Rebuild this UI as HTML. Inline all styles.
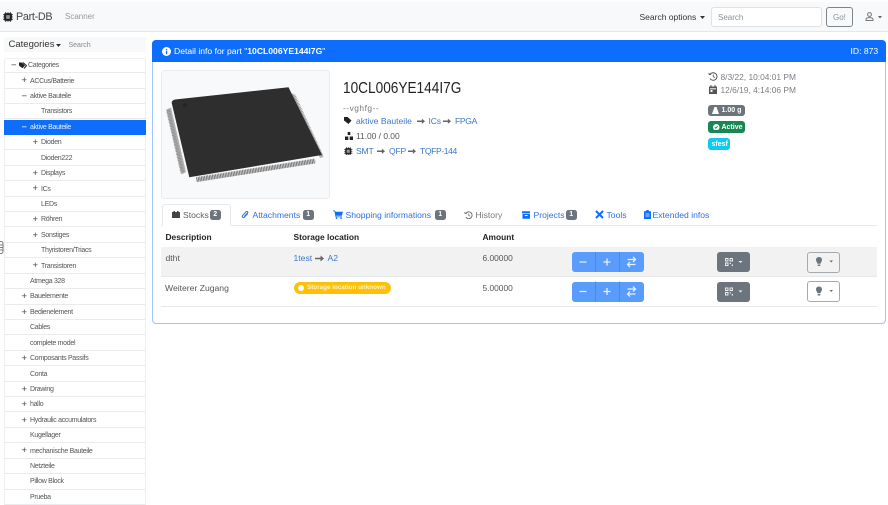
<!DOCTYPE html>
<html><head><meta charset="utf-8"><style>
*{box-sizing:border-box}
html,body{margin:0;padding:0;width:888px;height:500px;overflow:hidden;background:#fff;font-family:"Liberation Sans",sans-serif;color:#212529}
.a{position:absolute;white-space:nowrap;line-height:1}
svg{position:absolute;display:block}
.row{position:absolute;left:4px;width:141.5px;height:15.42px;border-bottom:1px solid #e9ebed;border-left:1px solid #eee;border-right:1px solid #eee;font-size:7px;letter-spacing:-.3px;line-height:14.4px;color:#555;white-space:nowrap}
.row.sel{background:#0d6efd;color:#e8f0ff;border-color:#0d6efd}
.row b{position:absolute;top:1.2px;font-weight:normal;font-size:9.5px;line-height:13px;color:#444;letter-spacing:0}
.row.sel b{color:#fff}
.row span{position:absolute;top:1.4px}
.lnk{color:#3a77c8}
.tab{position:absolute;top:204px;font-size:8.6px;line-height:1;white-space:nowrap;color:#2f6fe0}
.cnt{display:inline-block;position:absolute;background:#6c757d;color:#fff;font-size:7px;font-weight:bold;border-radius:2.5px;text-align:center;height:10px;line-height:10px;width:11.5px}
.btn{position:absolute;height:20px;border-radius:3px}
</style></head><body>

<div style="position:absolute;left:0;top:2px;width:888px;height:30px;background:#f8f9fa;border-bottom:1px solid #e6e7e9"></div>
<div style="position:absolute;left:0;top:0;width:888px;height:2px;background:#fdfdfd"></div>

<svg style="left:3px;top:11.5px" width="10" height="10" viewBox="0 0 11 11"><rect x="1.2" y="1.2" width="8.6" height="8.600" rx="1.500" fill="#222"/><path d="M3 0v11M5.500 0v11M8 0v11M0 3h11M0 5.500h11M0 8h11" stroke="#222" stroke-width=".8"/><rect x="3.500" y="3.500" width="4" height="4" fill="#999"/></svg>
<div class="a" style="left:16px;top:11.5px;font-size:10.8px;letter-spacing:-.3px;color:#444">Part-DB</div>
<div class="a" style="left:65px;top:13px;font-size:8px;color:#999">Scanner</div>

<div class="a" style="left:639.500px;top:13px;font-size:8.500px;color:#333">Search options</div>
<svg style="left:700px;top:15.500px" width="5" height="3"><path d="M0 0h5L2.500 3z" fill="#333"/></svg>
<div style="position:absolute;left:711px;top:6.500px;width:111px;height:20.500px;background:#fff;border:1px solid #dee2e6;border-radius:3px"></div>
<div class="a" style="left:718px;top:13.500px;font-size:8px;color:#8a8f94">Search</div>
<div style="position:absolute;left:826px;top:6.500px;width:27px;height:20.500px;border:1px solid #7d848a;border-radius:3px;background:#f8f9fa"></div>
<div class="a" style="left:833px;top:13.500px;font-size:8px;color:#8a9096">Go!</div>
<svg style="left:865px;top:12px" width="9" height="9" viewBox="0 0 9 9"><circle cx="4.500" cy="2.500" r="1.900" fill="none" stroke="#777"/><path d="M1 8.500V7.500C1 6 2.500 5.600 4.500 5.600S8 6 8 7.500v1z" fill="none" stroke="#777"/></svg>
<svg style="left:878px;top:16px" width="4" height="2.500"><path d="M0 0h4L2 2.500z" fill="#666"/></svg>

<div style="position:absolute;left:4px;top:37px;width:142px;height:15px;background:#f8f9fa"></div>
<div class="a" style="left:8.500px;top:39.500px;font-size:9.500px;color:#333">Categories</div>
<svg style="left:56px;top:43.500px" width="5" height="3"><path d="M0 0h5L2.500 3z" fill="#333"/></svg>
<div class="a" style="left:68.500px;top:41.500px;font-size:7px;color:#888">Search</div>

<div class="row" style="top:57.8px;border-top:1px solid #eee;border-radius:3px 3px 0 0"><b style="left:6px;top:0">−</b><svg style="left:14px;top:3.500px" width="8" height="7" viewBox="0 0 8 7"><path d="M0 .5h3l3 3-2.600 2.800L0 3.500z" fill="#222"/><path d="M4 .5l3.500 3.200-2.500 2.800" fill="none" stroke="#222"/></svg><span style="left:23px;top:.5px">Categories</span></div>
<div class="row" style="top:73.2px"><b style="left:16.500px">+</b><span style="left:25px">ACCus/Batterie</span></div>
<div class="row" style="top:88.6px"><b style="left:16.500px">−</b><span style="left:25px">aktive Bauteile</span></div>
<div class="row" style="top:104px"><span style="left:36px">Transistors</span></div>
<div class="row sel" style="top:119.500px"><b style="left:16.500px">−</b><span style="left:25px">aktive Bauteile</span></div>
<div class="row" style="top:134.900px"><b style="left:27.500px">+</b><span style="left:36px">Dioden</span></div>
<div class="row" style="top:150.300px"><span style="left:36px">Dioden222</span></div>
<div class="row" style="top:165.800px"><b style="left:27.500px">+</b><span style="left:36px">Displays</span></div>
<div class="row" style="top:181.200px"><b style="left:27.500px">+</b><span style="left:36px">ICs</span></div>
<div class="row" style="top:196.600px"><span style="left:36px">LEDs</span></div>
<div class="row" style="top:212px"><b style="left:27.500px">+</b><span style="left:36px">Röhren</span></div>
<div class="row" style="top:227.400px"><b style="left:27.500px">+</b><span style="left:36px">Sonstiges</span></div>
<div class="row" style="top:242.900px"><span style="left:36px">Thyristoren/Triacs</span></div>
<div class="row" style="top:258.300px"><b style="left:27.500px">+</b><span style="left:36px">Transistoren</span></div>
<div class="row" style="top:273.700px"><span style="left:25px">Atmega 328</span></div>
<div class="row" style="top:289.100px"><b style="left:16.500px">+</b><span style="left:25px">Bauelemente</span></div>
<div class="row" style="top:304.500px"><b style="left:16.500px">+</b><span style="left:25px">Bedienelement</span></div>
<div class="row" style="top:319.900px"><span style="left:25px">Cables</span></div>
<div class="row" style="top:335.400px"><span style="left:25px">complete model</span></div>
<div class="row" style="top:350.800px"><b style="left:16.500px">+</b><span style="left:25px">Composants Passifs</span></div>
<div class="row" style="top:366.200px"><span style="left:25px">Conta</span></div>
<div class="row" style="top:381.600px"><b style="left:16.500px">+</b><span style="left:25px">Drawing</span></div>
<div class="row" style="top:397px"><b style="left:16.500px">+</b><span style="left:25px">hallo</span></div>
<div class="row" style="top:412.400px"><b style="left:16.500px">+</b><span style="left:25px">Hydraulic accumulators</span></div>
<div class="row" style="top:427.900px"><span style="left:25px">Kugellager</span></div>
<div class="row" style="top:443.300px"><b style="left:16.500px">+</b><span style="left:25px">mechanische Bauteile</span></div>
<div class="row" style="top:458.700px"><span style="left:25px">Netzteile</span></div>
<div class="row" style="top:474.100px"><span style="left:25px">Pillow Block</span></div>
<div class="row" style="top:489.500px"><span style="left:25px">Prueba</span></div>

<svg style="left:0;top:241px" width="4" height="13" viewBox="0 0 4 13"><rect x="-3" y=".5" width="6" height="12" rx="2" fill="#fff" stroke="#555" stroke-width=".8"/><path d="M0 4h2.500M0 6.500h2.500M0 9h2.500" stroke="#555" stroke-width=".8"/></svg>

<div style="position:absolute;left:152px;top:40px;width:734px;height:284px;border:1px solid #9ec5fe;border-radius:4px;background:#fff"></div>
<div style="position:absolute;left:152px;top:40px;width:734px;height:22px;background:#0d6efd;border-radius:4px 4px 0 0"></div>
<svg style="left:162px;top:46.500px" width="9" height="9" viewBox="0 0 9 9"><circle cx="4.500" cy="4.500" r="4.500" fill="#fff"/><rect x="3.900" y="3.800" width="1.300" height="3.400" fill="#0d6efd"/><rect x="3.900" y="1.900" width="1.300" height="1.300" fill="#0d6efd"/></svg>
<div class="a" style="left:174px;top:47px;font-size:8.600px;color:#fff">Detail info for part "<b>10CL006YE144I7G</b>"</div>
<div class="a" style="left:850.500px;top:47px;font-size:8.600px;color:#fff">ID: 873</div>

<div style="position:absolute;left:161px;top:70px;width:169px;height:129px;background:#f8f9fa;border:1px solid #e9ecef;border-radius:3px"></div>
<svg style="left:161px;top:70px" width="169" height="129" viewBox="161 70 169 129">
<path d="M166.500 109.500 171 107.500 186 172 181.500 174.500 Z" fill="#b0b0b0"/>
<path d="M168 110 182.500 173" stroke="#8f8f8f" stroke-width="4" stroke-dasharray=".8 .7" fill="none"/>
<path d="M293 93 323.500 157 320 158 290 96Z" fill="#b5b5b5"/>
<path d="M294 95 322 156" stroke="#999" stroke-width="3" stroke-dasharray=".8 .7" fill="none"/>
<path d="M196 178 315 159 316 163 197 182Z" fill="#cfcfcf"/>
<path d="M196.500 179.500 315 161" stroke="#6e6e6e" stroke-width="5" stroke-dasharray=".8 .8" fill="none"/>
<path d="M175 99.500 288.500 87.300 322 155 189.300 177.300 171.700 103Q171.500 100.500 175 99.500Z" fill="#2e2e2e"/>
<ellipse cx="185" cy="105" rx="2" ry="1.500" fill="#232323"/>
</svg>

<div class="a" style="left:343px;top:80.500px;font-size:15.500px;color:#222;transform:scaleX(.88);transform-origin:left">10CL006YE144I7G</div>
<div class="a" style="left:343px;top:103.500px;font-size:8.400px;letter-spacing:.5px;color:#777">--vghfg--</div>
<svg style="left:344px;top:117px" width="8" height="7" viewBox="0 0 8 7"><path d="M0 0h3.500l4 3.500L4.500 7 0 3.500z" fill="#222"/></svg>
<div class="a lnk" style="left:356px;top:117px;font-size:8.600px;font-weight:500">aktive Bauteile</div>
<svg style="left:416.500px;top:118px" width="8" height="6.500" viewBox="0 0 9 7"><path d="M0 2.700h5.500V.5L9 3.500 5.500 6.500V4.300H0z" fill="#666"/></svg>
<div class="a lnk" style="left:428.500px;top:117px;font-size:8.600px;letter-spacing:-.2px">ICs</div>
<svg style="left:443px;top:118px" width="8" height="6.500" viewBox="0 0 9 7"><path d="M0 2.700h5.500V.5L9 3.500 5.500 6.500V4.300H0z" fill="#666"/></svg>
<div class="a lnk" style="left:455px;top:117px;font-size:8.600px;letter-spacing:-.35px">FPGA</div>

<svg style="left:344.500px;top:132px" width="8" height="8" viewBox="0 0 8 8"><path d="M2.700 0h2.600v3H2.700zM0 4.500h3.300V8H0zM4.700 4.500H8V8H4.700z" fill="#222"/></svg>
<div class="a" style="left:356px;top:132px;font-size:8.400px;color:#555">11.00 / 0.00</div>

<svg style="left:344px;top:146.500px" width="8.500" height="8.500" viewBox="0 0 11 11"><rect x="1.500" y="1.500" width="8" height="8" rx="1.200" fill="#222"/><path d="M3 0v11M5.500 0v11M8 0v11M0 3h11M0 5.500h11M0 8h11" stroke="#222" stroke-width=".8"/><rect x="3.500" y="3.500" width="4" height="4" fill="#999"/></svg>
<div class="a lnk" style="left:356px;top:147px;font-size:8.600px;letter-spacing:-.2px">SMT</div>
<svg style="left:377px;top:148px" width="8" height="6.500" viewBox="0 0 9 7"><path d="M0 2.700h5.500V.5L9 3.500 5.500 6.500V4.300H0z" fill="#666"/></svg>
<div class="a lnk" style="left:389px;top:147px;font-size:8.600px;letter-spacing:-.2px">QFP</div>
<svg style="left:408px;top:148px" width="8" height="6.500" viewBox="0 0 9 7"><path d="M0 2.700h5.500V.5L9 3.500 5.500 6.500V4.300H0z" fill="#666"/></svg>
<div class="a lnk" style="left:420px;top:147px;font-size:8.600px;letter-spacing:-.4px">TQFP-144</div>

<svg style="left:708px;top:72px" width="10" height="9" viewBox="0 0 10 9"><path d="M2 2.500A3.800 3.800 0 1 1 2 6.500" fill="none" stroke="#555" stroke-width="1"/><path d="M.5 .8 3.500 3H.8z" fill="#555"/><path d="M5.300 2.500V4.700L7 5.700" fill="none" stroke="#555" stroke-width=".8"/></svg>
<div class="a" style="left:720.500px;top:72.500px;font-size:8.400px;color:#7a7f84">8/3/22, 10:04:01 PM</div>
<svg style="left:709px;top:85px" width="8" height="9" viewBox="0 0 8 9"><path d="M0 1.500h8V9H0z" fill="#555"/><path d="M2 0v2M6 0v2" stroke="#555"/><path d="M1 3.300h6v1H1z" fill="#fff"/><rect x="1.500" y="5" width="2" height="2" fill="#fff"/></svg>
<div class="a" style="left:720.500px;top:85.500px;font-size:8.400px;color:#7a7f84">12/6/19, 4:14:06 PM</div>

<div style="position:absolute;left:707.500px;top:105px;width:37px;height:11px;background:#6c757d;border-radius:3px"></div>
<svg style="left:712px;top:107px" width="7" height="7" viewBox="0 0 7 7"><path d="M2.500 0h2L7 7H0z" fill="#fff"/></svg>
<div class="a" style="left:721.500px;top:107px;font-size:7px;font-weight:bold;color:#fff">1.00 g</div>
<div style="position:absolute;left:707.500px;top:121px;width:37.500px;height:11.500px;background:#198754;border-radius:3px"></div>
<svg style="left:713px;top:123.500px" width="6.500" height="6.500" viewBox="0 0 7 7"><circle cx="3.500" cy="3.500" r="3.500" fill="#fff"/><path d="M2 3.500l1 1 2-2" stroke="#198754" fill="none"/></svg>
<div class="a" style="left:721.500px;top:123.500px;font-size:7px;font-weight:bold;color:#fff">Active</div>
<div style="position:absolute;left:707.500px;top:138px;width:22.500px;height:11.500px;background:#0dcaf0;border-radius:3px"></div>
<div class="a" style="left:711.500px;top:140.500px;font-size:7px;font-weight:bold;color:#fff">sfesf</div>

<div style="position:absolute;left:161px;top:225px;width:716px;height:1px;background:#e6e8ea"></div>
<div style="position:absolute;left:161.500px;top:203.500px;width:69px;height:22.500px;background:#fff;border:1px solid #e6e8ea;border-bottom:1px solid #fff;border-radius:3px 3px 0 0"></div>
<svg style="left:171.500px;top:211px" width="8" height="7" viewBox="0 0 8 7"><path d="M0 1h8v6H0z" fill="#444"/><path d="M1.500 0h1.500v3H1.500zM5 0h1.500v3H5z" fill="#444"/></svg>
<div class="tab" style="left:183px;top:210.500px;color:#5b6166">Stocks</div>
<div class="cnt" style="left:209.500px;top:210px">2</div>

<svg style="left:241px;top:210px" width="8" height="9" viewBox="0 0 8 9"><path d="M6.800 3.500 3.400 7.200C2.300 8.300.6 7 1.600 5.600L5 1.800C6 .8 7.500 2 6.500 3L3.300 6.500" fill="none" stroke="#2f6fe0" stroke-width="1"/></svg>
<div class="tab" style="left:252.500px;top:210.500px">Attachments</div>
<div class="cnt" style="left:302.500px;top:210px">1</div>

<svg style="left:333px;top:210px" width="10" height="9" viewBox="0 0 10 9"><path d="M0 .5h2l.5 1.200H10L8.800 5.800H3.200L3.500 6.500H9V7.300H2.600L1.400 1.300H0z" fill="#0d6efd"/><circle cx="3.500" cy="8.200" r=".8" fill="#0d6efd"/><circle cx="8" cy="8.200" r=".8" fill="#0d6efd"/></svg>
<div class="tab" style="left:345.500px;top:210.500px">Shopping informations</div>
<div class="cnt" style="left:434.500px;top:210px">1</div>

<svg style="left:464px;top:210.500px" width="9" height="8.500" viewBox="0 0 10 9"><path d="M2 2.500A3.800 3.800 0 1 1 2 6.500" fill="none" stroke="#666" stroke-width="1"/><path d="M.5 .8 3.500 3H.8z" fill="#666"/><path d="M5.300 2.500V4.700L7 5.700" fill="none" stroke="#666" stroke-width=".8"/></svg>
<div class="tab" style="left:475.500px;top:210.500px;color:#777">History</div>

<svg style="left:521.500px;top:210.500px" width="8.500" height="8" viewBox="0 0 9 8"><path d="M0 0h9v2.300H0zM.5 3h8v5h-8z" fill="#0d6efd"/><path d="M3 4.500h3" stroke="#fff"/></svg>
<div class="tab" style="left:533.500px;top:210.500px">Projects</div>
<div class="cnt" style="left:565.500px;top:210px">1</div>

<svg style="left:595px;top:210px" width="9" height="9" viewBox="0 0 9 9"><path d="M1 1 8 8M8 1 1 8" stroke="#0d6efd" stroke-width="2"/></svg>
<div class="tab" style="left:606.500px;top:210.500px">Tools</div>
<svg style="left:643.500px;top:210px" width="7" height="9" viewBox="0 0 7 9"><path d="M0 1.200h2L2.500 0h2l.5 1.200h2V9H0z" fill="#0d6efd"/><path d="M1.500 4h4M1.500 6h4" stroke="#fff" stroke-width=".7"/></svg>
<div class="tab" style="left:652.500px;top:210.500px">Extended infos</div>

<div class="a" style="left:165.500px;top:232.500px;font-size:8.400px;font-weight:bold;color:#222">Description</div>
<div class="a" style="left:293.500px;top:232.500px;font-size:8.400px;font-weight:bold;color:#222">Storage location</div>
<div class="a" style="left:482.500px;top:232.500px;font-size:8.400px;font-weight:bold;color:#222">Amount</div>

<div style="position:absolute;left:161px;top:247px;width:716px;height:30px;background:#f2f2f2;border-bottom:1px solid #e6e8ea"></div>
<div style="position:absolute;left:161px;top:305.500px;width:716px;height:1px;background:#e6e8ea"></div>

<div class="a" style="left:165.500px;top:254px;font-size:8.600px;color:#555">dtht</div>
<div class="a lnk" style="left:293.500px;top:254px;font-size:8.600px">1test</div>
<svg style="left:315px;top:255px" width="9" height="7" viewBox="0 0 9 7"><path d="M0 2.700h5.500V.5L9 3.500 5.500 6.500V4.300H0z" fill="#666"/></svg>
<div class="a lnk" style="left:327.500px;top:254px;font-size:8.600px">A2</div>
<div class="a" style="left:482.500px;top:254px;font-size:8.400px;color:#555">6.00000</div>

<div class="a" style="left:165px;top:283.500px;font-size:8.600px;color:#555">Weiterer Zugang</div>
<div style="position:absolute;left:293.500px;top:282px;width:97.500px;height:12px;background:#ffc107;border-radius:6px"></div>
<svg style="left:298px;top:285px" width="6" height="6" viewBox="0 0 6 6"><circle cx="3" cy="3" r="3" fill="#fff"/></svg>
<div class="a" style="left:307px;top:285px;font-size:6.300px;font-weight:bold;color:#fff3cd">Storage location unknown</div>
<div class="a" style="left:482.500px;top:283.500px;font-size:8.400px;color:#555">5.00000</div>

<div class="btn" style="left:571.500px;top:252px;width:72.500px;background:#5a9cfc"></div>
<div class="btn" style="left:571.500px;top:281.500px;width:72.500px;background:#5a9cfc"></div>
<svg style="left:571px;top:252px" width="74" height="50" viewBox="0 0 74 50" fill="none">
<path d="M24.500 0v20M48.500 0v20M24.500 29.500v20M48.500 29.500v20" stroke="#3f86ec" stroke-width=".8"/>
<path d="M8.500 10h7M32.500 10h7M36 6.500v7M8.500 39.500h7M32.500 39.500h7M36 36v7" stroke="#fff" stroke-width="1.300" opacity=".85"/>
<path d="M56.500 7.500h8M62 5l2.500 2.500L62 10M64.500 12.500h-8M59 10l-2.500 2.500L59 15M56.500 37h8M62 34.500l2.500 2.500L62 39.500M64.500 42h-8M59 39.500l-2.500 2.500L59 44.500" stroke="#fff" stroke-width="1.300" opacity=".85"/>
</svg>

<div class="btn" style="left:716.500px;top:252px;width:33px;background:#6c757d"></div>
<div class="btn" style="left:716.500px;top:281.500px;width:33px;background:#6c757d"></div>
<svg style="left:724.500px;top:258px" width="18" height="38" viewBox="0 0 18 38"><g fill="none" stroke="#fff" stroke-width=".9" opacity=".9"><path d="M.5.500h2.500v2.500H.5zM5 .5h2.500v2.500H5zM.5 5h2.500v2.500H.5z"/><path d="M.5 30h2.500v2.500H.5zM5 30h2.500v2.500H5zM.5 34.500h2.500V37H.5z"/></g><path d="M4.700 4.700h1.300v1.300H4.700zM6.700 6.500H8V8H6.700zM4.700 34.200h1.300v1.300H4.700zM6.700 36H8v1.500H6.700z" fill="#fff" opacity=".9"/><path d="M13.500 3h4L15.500 5zM13.500 32.500h4L15.500 34.500z" fill="#fff" opacity=".9"/></svg>

<div class="btn" style="left:806.500px;top:251.500px;width:33.500px;height:21px;border:1px solid #a5aaaf;background:#f2f2f2"></div>
<div class="btn" style="left:806.500px;top:281px;width:33.500px;height:21px;border:1px solid #a5aaaf;background:#fff"></div>
<svg style="left:815.500px;top:257px" width="18" height="40" viewBox="0 0 18 40"><path d="M3 0C.8 0 0 1.600 0 3c0 1.400 1.200 2.300 1.500 3.800h3C4.800 5.300 6 4.400 6 3 6 1.600 5.200 0 3 0zM1.700 7.500h2.600V9H1.700z" fill="#6c757d"/><path d="M13.500 3.500h3.500L15.200 5.500z" fill="#666"/><g transform="translate(0 29.500)"><path d="M3 0C.8 0 0 1.600 0 3c0 1.400 1.200 2.300 1.500 3.800h3C4.800 5.300 6 4.400 6 3 6 1.600 5.200 0 3 0zM1.700 7.500h2.600V9H1.700z" fill="#6c757d"/><path d="M13.500 3.500h3.500L15.200 5.500z" fill="#666"/></g></svg>

</body></html>
